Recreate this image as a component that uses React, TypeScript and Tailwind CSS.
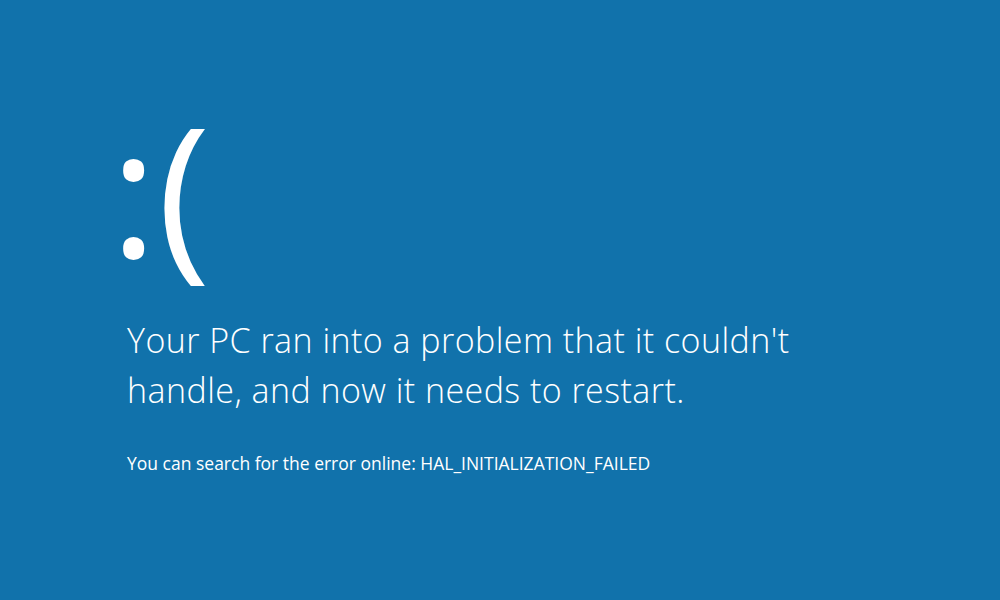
import React from 'react';

const App = () => {
  return (
    <div className="w-full h-screen bg-[#1172ab] text-white overflow-hidden font-['Open_Sans',sans-serif]">
      <div className="pl-[127px] pt-[79px] flex flex-col">
        <div className="-ml-[17px] text-[180px] leading-[220px] h-[220px] font-normal">:(</div>
        <div className="mt-[16px] text-[34px] leading-[50px] font-light tracking-[0.45px]">
          <p>Your PC ran into a problem that it couldn't</p>
          <p>handle, and now it needs to restart.</p>
        </div>
        <p className="mt-[36px] text-[17.5px] leading-[24px] font-normal">
          You can search for the error online: HAL_INITIALIZATION_FAILED
        </p>
      </div>
    </div>
  );
};

export default App;
